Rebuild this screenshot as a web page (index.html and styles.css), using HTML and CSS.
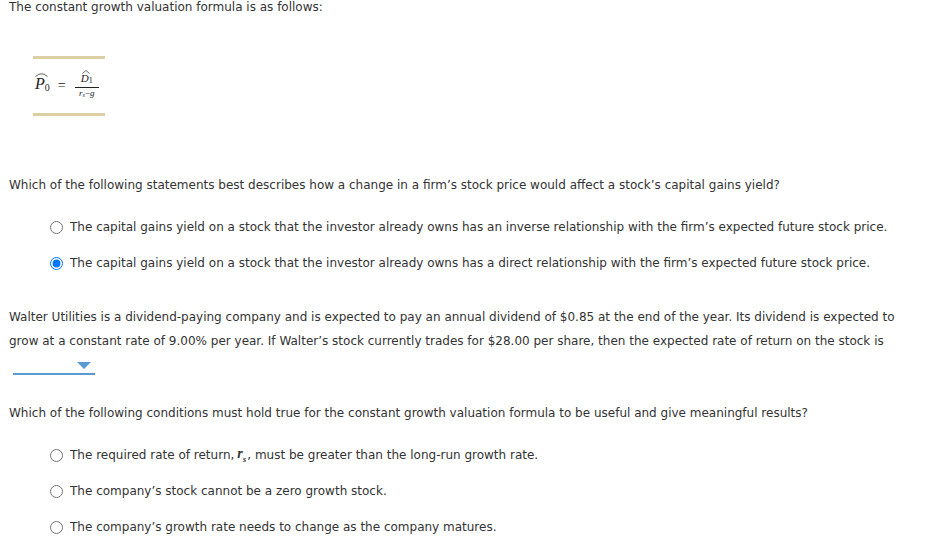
FILE: index.html
```html
<!DOCTYPE html>
<html lang="en">
<head>
  <meta charset="UTF-8" />
  <title>Constant Growth Valuation</title>
  <link rel="stylesheet" href="styles.css">
</head>
<body>
  <div class="page">
    <p class="intro">The constant growth valuation formula is as follows:</p>

    <div class="formula">
      <span class="hatted">
        <svg class="hat" width="13" height="5" viewBox="0 0 13 5"><path d="M0.5 4.5 Q6.5 -1 12.5 4.5" fill="none" stroke="#333" stroke-width="0.8"/></svg>
        <i>P</i><sub>0</sub>
      </span>
      <span class="eq">=</span>
      <span class="frac">
        <span class="num"><span class="hatted small"><svg class="hat" width="8" height="4" viewBox="0 0 8 4"><path d="M0.5 3.5 L4 0.5 L7.5 3.5" fill="none" stroke="#333" stroke-width="0.7"/></svg><i>D</i><sub>1</sub></span></span>
        <span class="den"><i>r</i><sub><i>s</i></sub>−<i>g</i></span>
      </span>
    </div>

    <p class="question">Which of the following statements best describes how a change in a firm’s stock price would affect a stock’s capital gains yield?</p>
    <form class="options">
      <label class="option"><input type="radio" name="q1"> The capital gains yield on a stock that the investor already owns has an inverse relationship with the firm’s expected future stock price.</label>
      <label class="option"><input type="radio" name="q1" checked> The capital gains yield on a stock that the investor already owns has a direct relationship with the firm’s expected future stock price.</label>
    </form>

    <p class="para">Walter Utilities is a dividend-paying company and is expected to pay an annual dividend of $0.85 at the end of the year. Its dividend is expected to grow at a constant rate of 9.00% per year. If Walter’s stock currently trades for $28.00 per share, then the expected rate of return on the stock is</p>
    <div class="dropdown"><span class="caret"></span></div>

    <p class="question q3">Which of the following conditions must hold true for the constant growth valuation formula to be useful and give meaningful results?</p>
    <form class="options">
      <label class="option"><input type="radio" name="q3"> The required rate of return, <span class="rs"><i>r</i><sub><i>s</i></sub></span>, must be greater than the long-run growth rate.</label>
      <label class="option"><input type="radio" name="q3"> The company’s stock cannot be a zero growth stock.</label>
      <label class="option"><input type="radio" name="q3"> The company’s growth rate needs to change as the company matures.</label>
    </form>
  </div>
</body>
</html>
```

FILE: styles.css
```css
html, body {
  margin: 0;
  padding: 0;
  background: #fff;
}
.page {
  font-family: 'DejaVu Sans', Verdana, sans-serif;
  font-size: 12px;
  color: #333;
  padding-left: 9px;
  width: 905px;
}
p { margin: 0; }
.intro {
  line-height: 14px;
}
.formula {
  margin: 42px 0 0 24px;
  width: 72px;
  height: 54px;
  border-top: 3px solid #dccfa3;
  border-bottom: 3px solid #dccfa3;
  display: flex;
  align-items: center;
  font-family: 'Liberation Serif', 'Times New Roman', serif;
  color: #222;
}
.hatted {
  position: relative;
  display: inline-block;
  margin-left: 2px;
  font-size: 16px;
  line-height: 16px;
}
.hatted sub { font-size: 10px; vertical-align: -2px; }
.hat {
  position: absolute;
  left: 0;
  top: -4px;
}
.hatted.small { font-size: 11px; line-height: 11px; margin: 0; }
.hatted.small sub { font-size: 8px; vertical-align: -1px; }
.hatted.small .hat { top: -3px; left: 1px; }
.eq {
  font-size: 14px;
  margin: 0 9px 0 8px;
}
.frac {
  display: inline-flex;
  flex-direction: column;
  align-items: center;
  width: 24px;
}
.num {
  padding-bottom: 1px;
  border-bottom: 1px solid #222;
  width: 100%;
  text-align: center;
  line-height: 13px;
}
.den {
  font-size: 9px;
  line-height: 11px;
}
.den sub { font-size: 6px; vertical-align: -1px; }
.question {
  line-height: 24px;
  margin-top: 57px;
}
.q3 { margin-top: 26px; }
.options {
  margin: 12px 0 0 0;
  display: flex;
  flex-direction: column;
}
.option {
  display: flex;
  align-items: center;
  height: 36px;
  padding-left: 41px;
  white-space: nowrap;
}
.option input {
  margin: 0 7px 0 0;
  width: 13px;
  height: 13px;
}
.rs {
  font-family: 'Liberation Serif', 'Times New Roman', serif;
  font-weight: bold;
  font-size: 14px;
  margin: 0 1px 0 3px;
}
.rs sub { font-size: 9px; }
.para {
  line-height: 24px;
  margin-top: 24px;
  width: 895px;
}
.dropdown {
  position: relative;
  margin-left: 4px;
  width: 82px;
  height: 20px;
  border-bottom: 2px solid #5a9ad0;
}
.caret {
  position: absolute;
  right: 4px;
  top: 9px;
  width: 0;
  height: 0;
  border-left: 7px solid transparent;
  border-right: 7px solid transparent;
  border-top: 7px solid #5a9ad0;
}
```
